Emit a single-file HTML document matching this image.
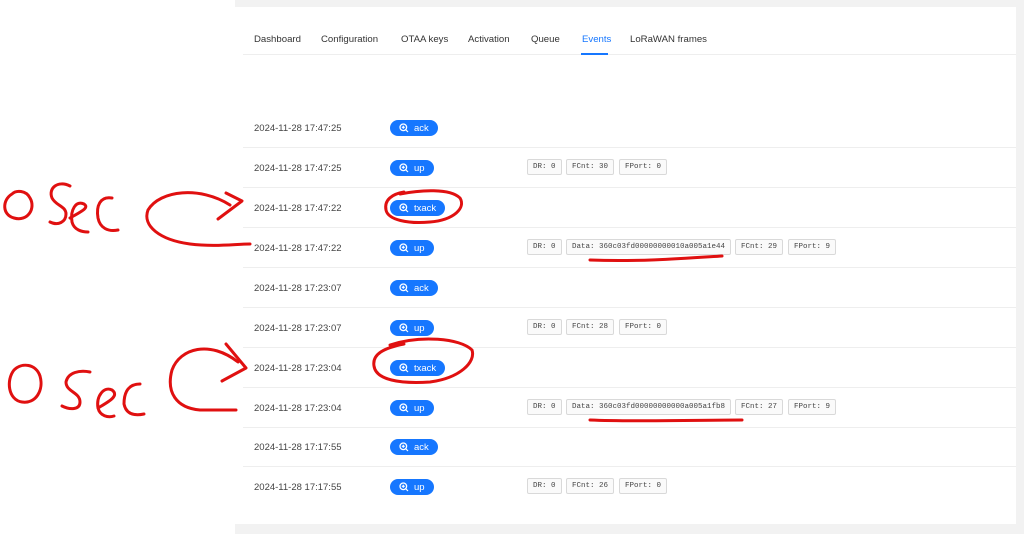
<!DOCTYPE html>
<html><head><meta charset="utf-8"><style>
*{margin:0;padding:0;box-sizing:border-box}
body{width:1024px;height:534px;position:relative;background:#fff;font-family:"Liberation Sans",sans-serif;overflow:hidden}
.g{position:absolute;background:#f2f2f2}
.tab{position:absolute;top:34px;font-size:9.6px;color:#333}
.row{position:absolute;left:243px;width:773px;height:40px;border-bottom:1px solid #eee}
.d{position:absolute;left:11px;top:15px;font-size:9.5px;color:#444}
.b{position:absolute;left:147px;top:12px;height:16px;border-radius:8px;background:#1677ff;color:#fff;font-size:9.5px;line-height:16px;padding:1px 9px 0 9px;white-space:nowrap}
.b svg{vertical-align:-2px;margin-right:5px}
.t{position:absolute;top:11px;height:16px;border:1px solid #d9d9d9;border-radius:2px;background:#fafafa;font-family:"Liberation Mono",monospace;font-size:7.5px;line-height:15px;padding:0 5px;color:#444;white-space:nowrap}
</style></head><body>
<div class="g" style="left:235px;top:0;width:789px;height:7px"></div>
<div class="g" style="left:1016px;top:0;width:8px;height:534px"></div>
<div class="g" style="left:235px;top:524px;width:789px;height:10px"></div>
<div class="tab" style="left:254px">Dashboard</div>
<div class="tab" style="left:321px">Configuration</div>
<div class="tab" style="left:401px">OTAA keys</div>
<div class="tab" style="left:468px">Activation</div>
<div class="tab" style="left:531px">Queue</div>
<div class="tab" style="left:582px;color:#1677ff">Events</div>
<div class="tab" style="left:630px">LoRaWAN frames</div>
<div style="position:absolute;left:243px;top:54px;width:773px;height:1px;background:#eee"></div>
<div style="position:absolute;left:581px;top:53px;width:27px;height:2px;background:#1677ff"></div>

<div class="row" style="top:108px"><div class="d">2024-11-28 17:47:25</div><div class="b"><svg width="10" height="10" viewBox="0 0 10 10"><circle cx="4.3" cy="4.3" r="3.3" fill="none" stroke="#fff" stroke-width="1.3"/><path d="M6.7 6.7L9 9M4.3 2.8v3M2.8 4.3h3" stroke="#fff" stroke-width="1.2"/></svg>ack</div></div>
<div class="row" style="top:148px"><div class="d">2024-11-28 17:47:25</div><div class="b"><svg width="10" height="10" viewBox="0 0 10 10"><circle cx="4.3" cy="4.3" r="3.3" fill="none" stroke="#fff" stroke-width="1.3"/><path d="M6.7 6.7L9 9M4.3 2.8v3M2.8 4.3h3" stroke="#fff" stroke-width="1.2"/></svg>up</div><div class="t" style="left:284px">DR: 0</div><div class="t" style="left:323px">FCnt: 30</div><div class="t" style="left:376px">FPort: 0</div></div>
<div class="row" style="top:188px"><div class="d">2024-11-28 17:47:22</div><div class="b"><svg width="10" height="10" viewBox="0 0 10 10"><circle cx="4.3" cy="4.3" r="3.3" fill="none" stroke="#fff" stroke-width="1.3"/><path d="M6.7 6.7L9 9M4.3 2.8v3M2.8 4.3h3" stroke="#fff" stroke-width="1.2"/></svg>txack</div></div>
<div class="row" style="top:228px"><div class="d">2024-11-28 17:47:22</div><div class="b"><svg width="10" height="10" viewBox="0 0 10 10"><circle cx="4.3" cy="4.3" r="3.3" fill="none" stroke="#fff" stroke-width="1.3"/><path d="M6.7 6.7L9 9M4.3 2.8v3M2.8 4.3h3" stroke="#fff" stroke-width="1.2"/></svg>up</div><div class="t" style="left:284px">DR: 0</div><div class="t" style="left:323px">Data: 360c03fd00000000010a005a1e44</div><div class="t" style="left:492px">FCnt: 29</div><div class="t" style="left:545px">FPort: 9</div></div>
<div class="row" style="top:268px"><div class="d">2024-11-28 17:23:07</div><div class="b"><svg width="10" height="10" viewBox="0 0 10 10"><circle cx="4.3" cy="4.3" r="3.3" fill="none" stroke="#fff" stroke-width="1.3"/><path d="M6.7 6.7L9 9M4.3 2.8v3M2.8 4.3h3" stroke="#fff" stroke-width="1.2"/></svg>ack</div></div>
<div class="row" style="top:308px"><div class="d">2024-11-28 17:23:07</div><div class="b"><svg width="10" height="10" viewBox="0 0 10 10"><circle cx="4.3" cy="4.3" r="3.3" fill="none" stroke="#fff" stroke-width="1.3"/><path d="M6.7 6.7L9 9M4.3 2.8v3M2.8 4.3h3" stroke="#fff" stroke-width="1.2"/></svg>up</div><div class="t" style="left:284px">DR: 0</div><div class="t" style="left:323px">FCnt: 28</div><div class="t" style="left:376px">FPort: 0</div></div>
<div class="row" style="top:348px"><div class="d">2024-11-28 17:23:04</div><div class="b"><svg width="10" height="10" viewBox="0 0 10 10"><circle cx="4.3" cy="4.3" r="3.3" fill="none" stroke="#fff" stroke-width="1.3"/><path d="M6.7 6.7L9 9M4.3 2.8v3M2.8 4.3h3" stroke="#fff" stroke-width="1.2"/></svg>txack</div></div>
<div class="row" style="top:388px"><div class="d">2024-11-28 17:23:04</div><div class="b"><svg width="10" height="10" viewBox="0 0 10 10"><circle cx="4.3" cy="4.3" r="3.3" fill="none" stroke="#fff" stroke-width="1.3"/><path d="M6.7 6.7L9 9M4.3 2.8v3M2.8 4.3h3" stroke="#fff" stroke-width="1.2"/></svg>up</div><div class="t" style="left:284px">DR: 0</div><div class="t" style="left:323px">Data: 360c03fd00000000000a005a1fb8</div><div class="t" style="left:492px">FCnt: 27</div><div class="t" style="left:545px">FPort: 9</div></div>
<div class="row" style="top:427px"><div class="d">2024-11-28 17:17:55</div><div class="b"><svg width="10" height="10" viewBox="0 0 10 10"><circle cx="4.3" cy="4.3" r="3.3" fill="none" stroke="#fff" stroke-width="1.3"/><path d="M6.7 6.7L9 9M4.3 2.8v3M2.8 4.3h3" stroke="#fff" stroke-width="1.2"/></svg>ack</div></div>
<div class="row" style="top:467px;border-bottom:none"><div class="d">2024-11-28 17:17:55</div><div class="b"><svg width="10" height="10" viewBox="0 0 10 10"><circle cx="4.3" cy="4.3" r="3.3" fill="none" stroke="#fff" stroke-width="1.3"/><path d="M6.7 6.7L9 9M4.3 2.8v3M2.8 4.3h3" stroke="#fff" stroke-width="1.2"/></svg>up</div><div class="t" style="left:284px">DR: 0</div><div class="t" style="left:323px">FCnt: 26</div><div class="t" style="left:376px">FPort: 0</div></div>

<svg style="position:absolute;left:0;top:0" width="1024" height="534" fill="none" stroke="#e01010" stroke-width="3" stroke-linecap="round" stroke-linejoin="round">
<path d="M12 194 C2 200 2 215 14 218 C28 222 36 208 30 198 C26 190 16 190 12 194Z"/>
<path d="M70 186 C58 180 48 188 52 198 C56 206 66 206 66 214 C66 222 58 226 50 222"/>
<path d="M70 218 C80 212 90 208 84 204 C76 200 70 210 72 222 C74 230 82 232 88 232"/>
<path d="M112 198 C100 196 96 206 98 218 C100 228 108 232 118 230"/>
<path d="M230 205 C200 186 160 190 148 210 C142 226 160 240 190 244 C215 247 235 244 250 244"/>
<path d="M226 193 L242 201 L218 219"/>
<path d="M400 194 C420 190 450 188 460 198 C466 208 454 220 430 222 C408 224 388 220 386 210 C384 200 392 194 404 192"/>
<path d="M590 260 C640 262 690 258 722 256"/>
<path d="M14 370 C6 380 8 400 22 402 C36 404 44 390 40 376 C36 364 22 362 14 370Z"/>
<path d="M90 372 C80 370 68 372 66 382 C66 392 80 392 80 402 C80 410 70 410 62 406"/>
<path d="M98 408 C108 402 120 396 112 390 C104 386 96 396 98 408 C100 416 108 418 114 416"/>
<path d="M140 384 C126 384 124 396 124 404 C126 414 134 416 144 414"/>
<path d="M238 362 C210 340 180 348 172 370 C166 392 176 408 200 410 C214 410 226 410 236 410"/>
<path d="M226 344 L246 368 L222 381"/>
<path d="M390 345 C420 335 460 338 472 350 C476 362 460 378 430 382 C400 384 376 380 374 366 C372 354 384 348 404 344"/>
<path d="M590 420 C640 422 700 420 742 420"/>
</svg>
</body></html>
